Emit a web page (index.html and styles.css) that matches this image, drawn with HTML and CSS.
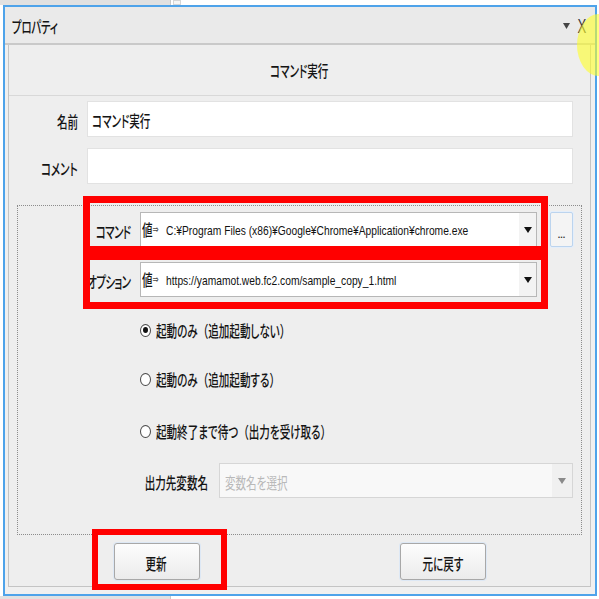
FILE: index.html
```html
<!DOCTYPE html>
<html lang="ja">
<head>
<meta charset="utf-8">
<title>プロパティ</title>
<link rel="stylesheet" href="styles.css">
</head>
<body>
<div class="behind behind-top"><span class="behind-bar"></span><span class="behind-box"></span></div>
<div class="window">
  <div class="titlebar">
    <span class="sq sq-l title">プロパティ</span>
    <span class="tb-ctrls">
      <svg class="tb-menu" width="7" height="6" viewBox="0 0 7 6"><path d="M0 0H7L3.5 6Z" fill="#454545"/></svg>
      <span class="sq sq-r tb-close">X</span>
    </span>
  </div>
  <div class="client">
    <div class="panel">
      <div class="header"><span class="sq sq-c">コマンド実行</span></div>

      <div class="frow frow-name">
        <label class="flabel"><span class="sq sq-r">名前</span></label>
        <div class="input"><span class="sq sq-l">コマンド実行</span></div>
      </div>
      <div class="frow frow-comment">
        <label class="flabel"><span class="sq sq-r">コメント</span></label>
        <div class="input"></div>
      </div>

      <div class="group">
        <div class="grow grow-cmd">
          <label class="glabel"><span class="sq sq-r">コマンド</span></label>
          <div class="combo">
            <span class="combo-val"><span class="sq sq-l kvwrap"><span class="kv">値</span><span class="kv-arrow">⇒</span></span><span class="latin">C:¥Program Files (x86)¥Google¥Chrome¥Application¥chrome.exe</span></span>
            <span class="drop"><svg width="8" height="6" viewBox="0 0 8 6"><path d="M0 0H8L4 6Z" fill="#111"/></svg></span>
          </div>
          <button class="browse">...</button>
        </div>
        <div class="grow grow-opt">
          <label class="glabel"><span class="sq sq-r">オプション</span></label>
          <div class="combo">
            <span class="combo-val"><span class="sq sq-l kvwrap"><span class="kv">値</span><span class="kv-arrow">⇒</span></span><span class="latin">https://yamamot.web.fc2.com/sample_copy_1.html</span></span>
            <span class="drop"><svg width="8" height="6" viewBox="0 0 8 6"><path d="M0 0H8L4 6Z" fill="#111"/></svg></span>
          </div>
        </div>

        <div class="radio radio-1"><span class="rcircle on"></span><span class="sq sq-l">起動のみ<span class="fw">（</span>追加起動しない<span class="fw">）</span></span></div>
        <div class="radio radio-2"><span class="rcircle"></span><span class="sq sq-l">起動のみ<span class="fw">（</span>追加起動する<span class="fw">）</span></span></div>
        <div class="radio radio-3"><span class="rcircle"></span><span class="sq sq-l">起動終了まで待つ<span class="fw">（</span>出力を受け取る<span class="fw">）</span></span></div>

        <div class="orow">
          <label class="olabel"><span class="sq sq-r">出力先変数名</span></label>
          <div class="ocombo">
            <span class="combo-val"><span class="sq sq-l placeholder">変数名を選択</span></span>
            <span class="drop drop-dis"><svg width="8" height="6" viewBox="0 0 8 6"><path d="M0 0H8L4 6Z" fill="#8a8a8a"/></svg></span>
          </div>
        </div>
      </div>

      <div class="actions">
        <button class="btn"><span class="sq sq-c">更新</span></button>
        <button class="btn"><span class="sq sq-c">元に戻す</span></button>
      </div>
    </div>
  </div>
</div>
<div class="behind behind-bottom"><span class="behind-bar"></span></div>

<div class="annot annot-cmd"></div>
<div class="annot annot-opt"></div>
<div class="annot annot-upd"></div>
<div class="cursor-hl"></div>
</body>
</html>
```

FILE: styles.css
```css
* { box-sizing: border-box; }
html, body { margin: 0; padding: 0; }
body {
  width: 599px;
  height: 599px;
  overflow: hidden;
  position: relative;
  background: #ffffff;
  font-family: "Noto Sans CJK JP", "Noto Sans", sans-serif;
  font-feature-settings: "palt";
  font-size: 16px;
  font-weight: 500;
  line-height: 20px;
  color: #141414;
}

/* narrow text rendering (the UI font is condensed) */
.sq { display: inline-block; transform: scaleX(.66); white-space: nowrap; }
.sq-l { transform-origin: left center; }
.sq-r { transform-origin: right center; }
.sq-c { transform-origin: center center; }
.fw { font-feature-settings: normal; }

/* things behind the window */
.behind { display: flex; }
.behind-top { height: 5px; }
.behind-bottom { height: 3px; }
.behind-bar { width: 171px; background: #e1e1e1; border-right: 1px solid #c9c9c9; }
.behind-box { width: 8px; margin-left: 2px; background: #f6f6f6; border: 1px solid #d6d6d6; }

/* window frame */
.window {
  margin-left: 3px;
  width: 594px;
  height: 591px;
  border: 2px solid #4ea3ea;
  background: #f0f0f0;
  display: flex;
  flex-direction: column;
}
.titlebar {
  height: 38px;
  flex: none;
  background: #eaeaea;
  border-bottom: 2px solid #c9c9c9;
  display: flex;
  align-items: center;
  justify-content: space-between;
  padding: 2px 9px 0 7px;
}
.title { letter-spacing: -0.5px; }
.tb-ctrls { display: flex; align-items: center; gap: 3px; }
.tb-close { font-family: "Liberation Sans", sans-serif; font-weight: 400; font-size: 20px; color: #3a3a3a; }

.client { flex: 1; padding: 0 4px 7px 3px; }
.panel {
  height: 100%;
  border: 1px solid #c4c4c4;
  border-top: none;
  background: #eeeeee;
  display: flex;
  flex-direction: column;
}
.header {
  height: 51px;
  flex: none;
  border-bottom: 1px solid #d8d8d8;
  display: flex;
  align-items: center;
  justify-content: center;
}

/* name / comment rows */
.frow { display: flex; align-items: center; }
.frow-name { margin-top: 5px; }
.frow-comment { margin-top: 11px; }
.flabel { width: 69px; margin-right: 9px; text-align: right; padding-top: 3px; }
.input {
  width: 486px;
  height: 36px;
  background: #ffffff;
  border: 1px solid #e2e2e2;
  padding: 2px 4px 0;
  display: flex;
  align-items: center;
}

/* dotted group */
.group {
  flex: none;
  height: 330px;
  margin: 21px 8px 0 8px;
  border: 1px dotted #8c8c8c;
}
.grow { display: flex; align-items: center; height: 35px; }
.grow-cmd { margin-top: 6px; }
.grow-opt { margin-top: 15px; }
.glabel { width: 112px; margin-right: 10px; text-align: right; padding-top: 2px; letter-spacing: -1px; }

.combo {
  width: 397px;
  height: 35px;
  background: #ffffff;
  border: 1px solid #b7b7b7;
  display: flex;
  align-items: center;
  padding-left: 1px;
}
.combo-val { flex: 1; min-width: 0; padding-top: 2px; display: flex; align-items: center; white-space: nowrap; }
.kvwrap { margin-right: -12px; }
.kv { font-size: 16px; }
.kv-arrow {
  font-family: "DejaVu Sans", sans-serif;
  font-weight: 400;
  font-size: 11px;
  color: #444;
  margin-right: 11px;
  position: relative;
  top: -3px;
}
.latin {
  display: inline-block;
  transform: scaleX(.76);
  transform-origin: left center;
  font-family: "Liberation Sans", Arial, sans-serif;
  font-weight: 400;
  font-size: 13.5px;
  color: #111;
  white-space: nowrap;
}
.drop {
  width: 17px;
  height: 100%;
  flex: none;
  background: #f3f3f3;
  display: flex;
  align-items: center;
  justify-content: center;
}
.browse {
  margin-left: 13px;
  width: 23px;
  height: 35px;
  padding: 0 0 6px;
  border: 1px solid #bcd4ee;
  border-radius: 2px;
  background: #f4f4f4;
  box-shadow: 0 0 0 1px #e4eefa;
  font-family: "Liberation Sans", sans-serif;
  font-weight: 700;
  font-size: 9px;
  color: #333;
  display: flex;
  align-items: flex-end;
  justify-content: center;
}

/* radios */
.radio { display: flex; align-items: center; height: 20px; margin-left: 122px; }
.radio-1 { margin-top: 23px; }
.radio-2 { margin-top: 29px; }
.radio-3 { margin-top: 32px; }
.rcircle {
  flex: none;
  width: 11px;
  height: 13px;
  margin-right: 5px;
  border-radius: 50%;
  border: 1px solid #4a4a4a;
  background: radial-gradient(#ffffff 55%, #e8e8e8);
  display: flex;
  align-items: center;
  justify-content: center;
}
.rcircle.on::after {
  content: "";
  width: 5px;
  height: 6px;
  border-radius: 50%;
  background: #111;
}

/* output variable */
.orow { display: flex; align-items: center; height: 35px; margin-top: 22px; }
.olabel { width: 190px; margin-right: 11px; text-align: right; padding-top: 2px; }
.ocombo {
  width: 354px;
  height: 35px;
  background: #f8f8f8;
  border: 1px solid #d6d6d6;
  display: flex;
  align-items: center;
  padding-left: 5px;
}
.placeholder { color: #b9b9b9; font-weight: 400; }
.drop-dis { width: 20px; background: #f0f0f0; }

/* action buttons */
.actions { display: flex; justify-content: center; gap: 200px; margin-top: 8px; }
.btn {
  width: 86px;
  height: 37px;
  padding: 2px 0 0;
  border: 1px solid #a8a8a8;
  border-radius: 3px;
  background: linear-gradient(#fdfdfd, #ebebeb);
  box-shadow: 0 0 0 1px #dde8f5;
  font: inherit;
  color: inherit;
  display: flex;
  align-items: center;
  justify-content: center;
}

/* red annotation frames and cursor highlight (overlays) */
.annot { position: absolute; border: 7px solid #ff0000; }
.annot-cmd { left: 83px; top: 196px; width: 465px; height: 57px; }
.annot-opt { left: 83px; top: 253px; width: 465px; height: 56px; }
.annot-upd { left: 92px; top: 529px; width: 135px; height: 61px; border-width: 6px; }
.cursor-hl {
  position: absolute;
  left: 577px;
  top: 14px;
  width: 22px;
  height: 62px;
  border-radius: 22px 0 0 22px / 31px 0 0 31px;
  background: rgba(255, 255, 40, .6);
}
```
